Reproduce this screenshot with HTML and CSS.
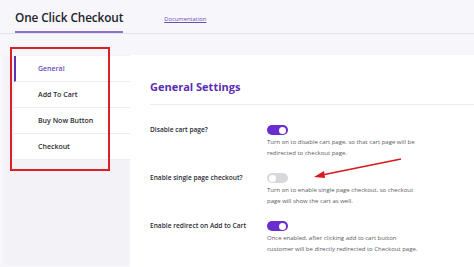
FILE: index.html
```html
<!DOCTYPE html>
<html lang="en">
<head>
    <meta charset="UTF-8" />
    <title>One Click Checkout - Settings</title>
    <link rel="stylesheet" href="styles.css">
</head>
<body>
    <header class="topbar">
        <div class="brand">One Click Checkout</div>
        <a class="doc-link" href="#">Documentation</a>
    </header>

    <div class="layout">
        <aside class="sidebar">
            <ul class="menu">
                <li class="menu-item active">General</li>
                <li class="menu-item">Add To Cart</li>
                <li class="menu-item">Buy Now Button</li>
                <li class="menu-item">Checkout</li>
            </ul>
        </aside>

        <main class="content">
            <h1>General Settings</h1>

            <div class="setting">
                <div class="setting-label">Disable cart page?</div>
                <div class="setting-control">
                    <span class="toggle on"></span>
                    <p>Turn on to disable cart page, so that cart page will be<br>redirected to checkout page.</p>
                </div>
            </div>

            <div class="setting">
                <div class="setting-label">Enable single page checkout?</div>
                <div class="setting-control">
                    <span class="toggle"></span>
                    <p>Turn on to enable single page checkout, so checkout<br>page will show the cart as well.</p>
                </div>
            </div>

            <div class="setting">
                <div class="setting-label">Enable redirect on Add to Cart</div>
                <div class="setting-control">
                    <span class="toggle on"></span>
                    <p>Once enabled, after clicking add to cart button<br>customer will be directly redirected to Checkout page.</p>
                </div>
            </div>
        </main>
    </div>

    <!-- annotations drawn over the screenshot -->
    <div class="mark-box"></div>
    <svg class="mark-arrow" width="474" height="267" viewBox="0 0 474 267">
        <line x1="401" y1="159" x2="322" y2="175" stroke="#d71920" stroke-width="1.6" />
        <polygon points="314,177 324,171 325,178" fill="#d71920" />
    </svg>
</body>
</html>
```

FILE: styles.css
```css
* {
    box-sizing: border-box;
    margin: 0;
    padding: 0;
}
body {
    font-family: 'Open Sans', 'Noto Sans', sans-serif;
    background: #f7f6fa;
    color: #333;
    width: 474px;
    height: 267px;
    overflow: hidden;
    position: relative;
}
.topbar {
    height: 34px;
    display: flex;
    align-items: flex-end;
    padding-left: 15px;
    border-bottom: 1px solid #e4e3ea;
}
.brand {
    font-size: 11.8px;
    font-weight: 600;
    color: #23232b;
    height: 33px;
    line-height: 34px;
    border-bottom: 2px solid #8d72c9;
    letter-spacing: -0.1px;
}
.doc-link {
    font-size: 5.8px;
    color: #6a4fb5;
    margin-left: 41px;
    align-self: center;
    margin-top: 4px;
}
.layout {
    display: flex;
    margin-top: 21px;
    height: 212px;
}
.sidebar {
    width: 127px;
    margin-left: 3px;
    padding-left: 11px;
    padding-top: 1px;
    background: #f3f2f7;
    margin-bottom: 2px;
}
.menu {
    list-style: none;
    background: #fff;
}
.menu-item {
    height: 26px;
    line-height: 26px;
    padding-left: 24px;
    font-size: 7px;
    font-weight: 600;
    color: #2b2b33;
    border-bottom: 1px solid #ececf1;
}
.menu-item.active {
    color: #6a4bb8;
    border-left: 2px solid #5b36b0;
    padding-left: 22px;
}
.content {
    flex: 1;
    background: #fff;
    padding: 24px 0 0 20px;
}
h1 {
    font-size: 11px;
    font-weight: 700;
    color: #5a2db3;
    height: 26px;
    line-height: 16px;
    border-bottom: 1px solid #ebeaf0;
    margin-bottom: 20px;
}
.setting {
    display: grid;
    grid-template-columns: 117px 1fr;
    height: 48px;
}
.setting-label {
    font-size: 6.6px;
    font-weight: 600;
    color: #2b2b33;
    line-height: 10px;
}
.toggle {
    display: block;
    width: 21px;
    height: 10px;
    border-radius: 5px;
    background: #d9d8dd;
    position: relative;
}
.toggle::after {
    content: '';
    position: absolute;
    top: 1.5px;
    left: 2px;
    width: 7px;
    height: 7px;
    border-radius: 50%;
    background: #fff;
}
.toggle.on {
    background: #6a2dcf;
}
.toggle.on::after {
    left: 12px;
}
.setting-control p {
    font-size: 6px;
    color: #5a5a62;
    line-height: 10.5px;
    margin-top: 2px;
}
.mark-box {
    position: absolute;
    left: 10px;
    top: 47px;
    width: 100px;
    height: 124px;
    border: 2px solid #dc1f26;
}
.mark-arrow {
    position: absolute;
    left: 0;
    top: 0;
}
```
